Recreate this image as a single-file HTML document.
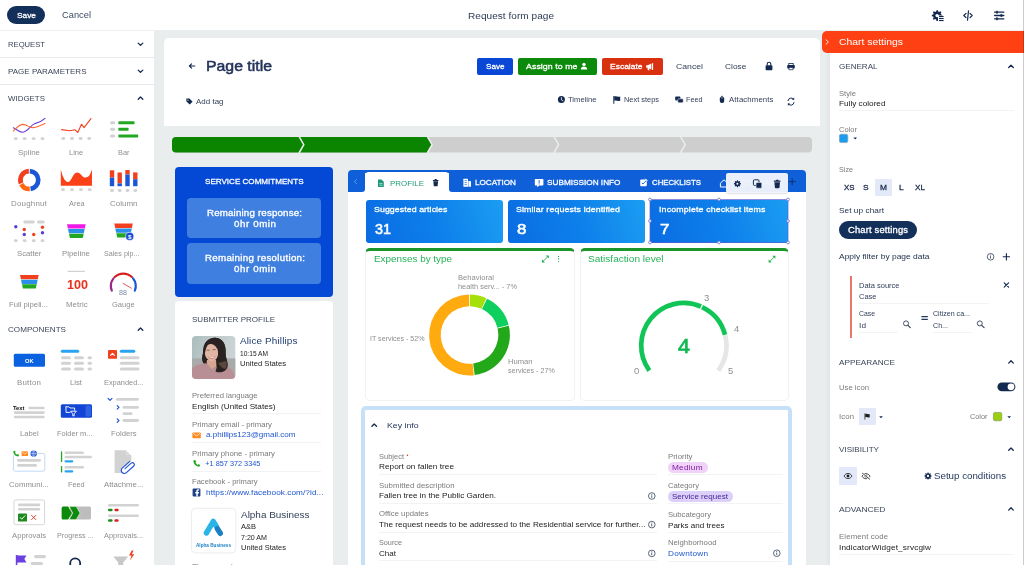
<!DOCTYPE html>
<html lang="en">
<head>
<meta charset="utf-8">
<title>Request form page</title>
<style>
html,body{margin:0;padding:0;}
body{width:1024px;height:565px;overflow:hidden;position:relative;background:#eaedee;font-family:"Liberation Sans", sans-serif;}
#app{position:absolute;left:0;top:0;width:1024px;height:565px;overflow:hidden;}
#app>div{position:absolute;box-sizing:border-box;}
#txt{position:absolute;left:0;top:0;width:1024px;height:565px;will-change:transform;}
#gfx{position:absolute;left:0;top:0;width:1024px;height:565px;overflow:hidden;}
.t{position:absolute;white-space:nowrap;font-family:"Liberation Sans", sans-serif;transform-origin:0 50%;}
</style>
</head>
<body>
<div id="app">
<div style="left:0px;top:0px;width:1024px;height:31px;background:#ffffff;"></div>
<div style="left:0px;top:30px;width:1024px;height:1px;background:#eceff1;"></div>
<div style="left:0px;top:31px;width:154px;height:534px;background:#ffffff;"></div>
<div style="left:0px;top:57px;width:154px;height:1px;background:#e7eaec;"></div>
<div style="left:0px;top:84px;width:154px;height:1px;background:#e7eaec;"></div>
<div style="left:7.2px;top:6.2px;width:37.8px;height:18px;background:#12305a;border-radius:9px;"></div>
<div style="left:164px;top:38px;width:656px;height:88px;background:#ffffff;border-radius:5px 5px 0 0;"></div>
<div style="left:476.5px;top:57.5px;width:36.5px;height:17.5px;background:#0a47d6;border-radius:2px;"></div>
<div style="left:517.5px;top:57.5px;width:79.5px;height:17.5px;background:#0b8a0b;border-radius:2px;"></div>
<div style="left:602px;top:57.5px;width:61px;height:17.5px;background:#d9300f;border-radius:2px;"></div>
<div style="left:175px;top:167px;width:158px;height:129.5px;background:#0449d6;border-radius:4px;"></div>
<div style="left:187px;top:197.5px;width:133.5px;height:40.5px;background:#3f7fe0;border-radius:4px;"></div>
<div style="left:187px;top:243px;width:133.5px;height:41px;background:#3f7fe0;border-radius:4px;"></div>
<div style="left:175px;top:301px;width:158px;height:270px;background:#ffffff;border-radius:4px;"></div>
<div style="left:192px;top:413.0px;width:129px;height:0.8px;background:#f1f3f4;"></div>
<div style="left:192px;top:441.79999999999995px;width:129px;height:0.8px;background:#f1f3f4;"></div>
<div style="left:192px;top:470.5px;width:129px;height:0.8px;background:#f1f3f4;"></div>
<div style="left:347.5px;top:170.2px;width:458px;height:400px;background:#ffffff;border-radius:4px 4px 0 0;"></div>
<div style="left:347.5px;top:170.2px;width:17.7px;height:22px;background:#0e5fd8;border-radius:4px 0 3px 0;"></div>
<div style="left:360px;top:170.2px;width:100px;height:3px;background:#0e5fd8;"></div>
<div style="left:449px;top:170.2px;width:356.5px;height:22px;background:#0e5fd8;border-radius:0 4px 0 3px;"></div>
<div style="left:365px;top:172px;width:84.2px;height:21px;background:#ffffff;border-radius:4px 4px 0 0;"></div>
<div style="left:365.5px;top:199.5px;width:137px;height:43px;background:linear-gradient(72deg,#0a6ce3 0%,#0d7fea 50%,#1b9df2 100%);border-radius:3px;"></div>
<div style="left:508px;top:199.5px;width:137px;height:43px;background:linear-gradient(72deg,#0a6ce3 0%,#0d7fea 50%,#1b9df2 100%);border-radius:3px;"></div>
<div style="left:650px;top:199.5px;width:138px;height:43px;background:linear-gradient(72deg,#0a6ce3 0%,#0d7fea 50%,#1b9df2 100%);border-radius:2px;"></div>
<div style="left:365px;top:248px;width:209.5px;height:153px;background:#ffffff;border-radius:5px;border:1px solid #eff1f2;border-top:3px solid #1a962a;"></div>
<div style="left:579.5px;top:248px;width:209px;height:153px;background:#ffffff;border-radius:5px;border:1px solid #eff1f2;border-top:3px solid #1a962a;"></div>
<div style="left:361px;top:406px;width:431px;height:170px;background:#ffffff;border-radius:5px;border:4px solid #c6e1f7;"></div>
<div style="left:379px;top:473.90000000000003px;width:278px;height:0.8px;background:#f1f3f4;"></div>
<div style="left:379px;top:502.8px;width:278px;height:0.8px;background:#f1f3f4;"></div>
<div style="left:379px;top:531.6px;width:278px;height:0.8px;background:#f1f3f4;"></div>
<div style="left:379px;top:560.4px;width:278px;height:0.8px;background:#f1f3f4;"></div>
<div style="left:668px;top:462.2px;width:39.6px;height:10.6px;background:#f1d2f8;border-radius:5.3px;"></div>
<div style="left:668px;top:474.2px;width:115px;height:0.8px;background:#f1f3f4;"></div>
<div style="left:668px;top:491px;width:65.2px;height:10.6px;background:#ddd0f8;border-radius:5.3px;"></div>
<div style="left:668px;top:503.2px;width:115px;height:0.8px;background:#f1f3f4;"></div>
<div style="left:668px;top:532px;width:115px;height:0.8px;background:#f1f3f4;"></div>
<div style="left:668px;top:560.8px;width:115px;height:0.8px;background:#f1f3f4;"></div>
<div style="left:825px;top:53px;width:5px;height:512px;background:linear-gradient(90deg,rgba(0,0,0,0),rgba(0,0,0,0.035));"></div>
<div style="left:830px;top:31px;width:194px;height:534px;background:#ffffff;"></div>
<div style="left:822.4px;top:30.8px;width:201.6px;height:22px;background:#ff4013;border-radius:5px 0 0 5px;"></div>
<div style="left:839px;top:110px;width:175px;height:0.8px;background:#f1f3f4;"></div>
<div style="left:875px;top:178.6px;width:17.4px;height:17.4px;background:#e4e9fa;border-radius:1px;"></div>
<div style="left:839px;top:220.6px;width:78px;height:18px;background:#12305a;border-radius:9px;"></div>
<div style="left:850px;top:276px;width:1.6px;height:62px;background:#e8776a;"></div>
<div style="left:859px;top:303.3px;width:130px;height:0.8px;background:#f1f3f4;"></div>
<div style="left:859px;top:332px;width:38.5px;height:0.8px;background:#f1f3f4;"></div>
<div style="left:933px;top:332px;width:38.5px;height:0.8px;background:#f1f3f4;"></div>
<div style="left:858.6px;top:407.6px;width:17.4px;height:17.8px;background:#e4e9fa;border-radius:1px;"></div>
<div style="left:839px;top:467.4px;width:18px;height:17.6px;background:#e4e9fa;border-radius:1px;"></div>
<div style="left:839px;top:554px;width:175px;height:0.8px;background:#f1f3f4;"></div>
<svg id="gfx" width="1024" height="565" viewBox="0 0 1024 565">
<g fill="#13294f">
<path d="M936.5 10.2l1.3 0 .4 1.4 1 .4 1.3-.7 .9 .9-.7 1.3 .4 1 1.4 .4 0 1.3-1.4 .4-.4 1 .7 1.3-.9 .9-1.3-.7-1 .4-.4 1.4-1.3 0-.4-1.4-1-.4-1.3 .7-.9-.9 .7-1.3-.4-1-1.4-.4 0-1.3 1.4-.4 .4-1-.7-1.3 .9-.9 1.3 .7 1-.4z"/>
</g>
<circle cx="937.1" cy="15.6" r="1.7" fill="#fff"/>
<rect x="938" y="15.5" width="6" height="6" fill="#fff"/>
<g fill="#13294f"><rect x="939" y="16" width="4.6" height="1.1"/><rect x="939" y="18" width="4.6" height="1.1"/><rect x="939" y="20" width="4.6" height="1.1"/></g>

<g fill="none" stroke="#13294f" stroke-width="1.2" stroke-linecap="round" stroke-linejoin="round">
<path d="M966 13.3L963.8 15.5L966 17.7"/><path d="M970 13.3L972.2 15.5L970 17.7"/><path d="M968.5 10.8L967.5 20.2"/></g>
<g stroke="#13294f" stroke-width="1.3" stroke-linecap="round">
<path d="M994.6 12.2H1003.8M994.6 15.5H1003.8M994.6 18.8H1003.8"/></g>
<g fill="#13294f"><rect x="996.2" y="10.8" width="1.6" height="2.8"/><rect x="1000.6" y="14.1" width="1.6" height="2.8"/><rect x="996.2" y="17.4" width="1.6" height="2.8"/></g>
<path d="M138.2 43.1L140.5 45.400000000000006L142.8 43.1" fill="none" stroke="#13294f" stroke-width="1.3" stroke-linecap="round" stroke-linejoin="round"/>
<path d="M138.2 70.10000000000001L140.5 72.4L142.8 70.10000000000001" fill="none" stroke="#13294f" stroke-width="1.3" stroke-linecap="round" stroke-linejoin="round"/>
<path d="M138.2 99.3L140.5 97.0L142.8 99.3" fill="none" stroke="#13294f" stroke-width="1.3" stroke-linecap="round" stroke-linejoin="round"/>
<path d="M138.2 330.3L140.5 328.0L142.8 330.3" fill="none" stroke="#13294f" stroke-width="1.3" stroke-linecap="round" stroke-linejoin="round"/>
<path d="M13.3 127.8C17 129.6 19.5 132.6 23 132.2C28 131.6 30.5 125.2 35 123.6C39 122.6 41.5 121.8 45 118.4" fill="none" stroke="#6b3fd9" stroke-width="1.1" stroke-linecap="round"/>
<path d="M13.3 131.2C16.5 128 19 124.4 23 124.4C27 124.6 29.5 128 33 127.6C37.5 127 41 125.4 45 123.4" fill="none" stroke="#ff6a33" stroke-width="1.1" stroke-linecap="round"/>
<rect x="13.9" y="137.29999999999998" width="3.8" height="2.8" rx="1.4" fill="#d2d2d2"/>
<rect x="22.8" y="137.29999999999998" width="3.8" height="2.8" rx="1.4" fill="#d2d2d2"/>
<rect x="31.800000000000004" y="137.29999999999998" width="3.8" height="2.8" rx="1.4" fill="#d2d2d2"/>
<rect x="40.6" y="137.29999999999998" width="3.8" height="2.8" rx="1.4" fill="#d2d2d2"/>
<path d="M61.6 129.6L69.5 130.8L75 129.8L77.8 132.4L81.5 124.2L84 127.6L91 118.6" fill="none" stroke="#f2401e" stroke-width="1.1" stroke-linecap="round" stroke-linejoin="round"/>
<rect x="61.4" y="137.1" width="3.8" height="2.8" rx="1.4" fill="#d2d2d2"/>
<rect x="70.1" y="137.1" width="3.8" height="2.8" rx="1.4" fill="#d2d2d2"/>
<rect x="78.69999999999999" y="137.1" width="3.8" height="2.8" rx="1.4" fill="#d2d2d2"/>
<rect x="87.3" y="137.1" width="3.8" height="2.8" rx="1.4" fill="#d2d2d2"/>
<rect x="110" y="121.3" width="5.200000000000003" height="3" rx="1.5" fill="#d2d2d2"/>
<rect x="118.4" y="121.3" width="16.099999999999994" height="3" rx="0.4" fill="#22a722"/>
<rect x="110" y="127.80000000000001" width="5.200000000000003" height="3" rx="1.5" fill="#d2d2d2"/>
<rect x="118.4" y="127.80000000000001" width="10.099999999999994" height="3" rx="0.4" fill="#22a722"/>
<rect x="110" y="134.5" width="5.200000000000003" height="3" rx="1.5" fill="#d2d2d2"/>
<rect x="118.4" y="134.5" width="19.799999999999983" height="3" rx="0.4" fill="#22a722"/>
<path d="M29.89 168.72A11.3 11.3 0 0 1 30.87 191.19L30.22 186.54A6.6 6.6 0 0 0 29.65 173.41Z" fill="#1a56d6"/>
<path d="M29.89 191.28A11.3 11.3 0 0 1 19.23 185.13L23.42 183.00A6.6 6.6 0 0 0 29.65 186.59Z" fill="#ff6a13"/>
<path d="M18.82 184.23A11.3 11.3 0 0 1 28.71 168.72L28.95 173.41A6.6 6.6 0 0 0 23.18 182.47Z" fill="#f2401e"/>
<path d="M60.8 185.8V169.6C62.5 176 64.5 182 68 182C71.5 182 73 172.4 77 172.4C81 172.4 82 177.6 85.5 177.6C89 177.6 90.5 174 92 169.6V185.8Z" fill="#fb4117"/>
<rect x="61.1" y="188.29999999999998" width="3.8" height="2.8" rx="1.4" fill="#d2d2d2"/>
<rect x="70.1" y="188.29999999999998" width="3.8" height="2.8" rx="1.4" fill="#d2d2d2"/>
<rect x="79.1" y="188.29999999999998" width="3.8" height="2.8" rx="1.4" fill="#d2d2d2"/>
<rect x="87.8" y="188.29999999999998" width="3.8" height="2.8" rx="1.4" fill="#d2d2d2"/>
<rect x="109.8" y="170.3" width="4.4" height="7.299999999999983" fill="#f2401e"/>
<rect x="109.8" y="177.6" width="4.4" height="8.599999999999994" fill="#1a56d6"/>
<rect x="117.5" y="172.5" width="4.4" height="10.900000000000006" fill="#f2401e"/>
<rect x="117.5" y="183.4" width="4.4" height="2.799999999999983" fill="#1a56d6"/>
<rect x="125.3" y="170" width="4.4" height="4.599999999999994" fill="#f2401e"/>
<rect x="125.3" y="174.6" width="4.4" height="11.599999999999994" fill="#1a56d6"/>
<rect x="133.10000000000002" y="172.4" width="4.4" height="6.799999999999983" fill="#f2401e"/>
<rect x="133.10000000000002" y="179.2" width="4.4" height="7.0" fill="#1a56d6"/>
<rect x="110.1" y="189.1" width="3.8" height="2.8" rx="1.4" fill="#d2d2d2"/>
<rect x="117.8" y="189.1" width="3.8" height="2.8" rx="1.4" fill="#d2d2d2"/>
<rect x="125.6" y="189.1" width="3.8" height="2.8" rx="1.4" fill="#d2d2d2"/>
<rect x="133.4" y="189.1" width="3.8" height="2.8" rx="1.4" fill="#d2d2d2"/>
<rect x="23.3" y="220.5" width="11.400000000000002" height="3" rx="1.5" fill="#d2d2d2"/>
<rect x="37" y="220.5" width="7.700000000000003" height="3" rx="1.5" fill="#d2d2d2"/>
<circle cx="15.8" cy="226.7" r="1.7" fill="#5a3fd6"/>
<circle cx="24.3" cy="229.5" r="1.7" fill="#f2401e"/>
<circle cx="24.3" cy="234.5" r="1.7" fill="#5a3fd6"/>
<circle cx="33.7" cy="234.5" r="1.7" fill="#f2401e"/>
<circle cx="42.5" cy="227.3" r="1.7" fill="#f2401e"/>
<circle cx="42.5" cy="232.8" r="1.7" fill="#5a3fd6"/>
<rect x="13.9" y="239.29999999999998" width="3.8" height="2.8" rx="1.4" fill="#d2d2d2"/>
<rect x="22.8" y="239.29999999999998" width="3.8" height="2.8" rx="1.4" fill="#d2d2d2"/>
<rect x="31.800000000000004" y="239.29999999999998" width="3.8" height="2.8" rx="1.4" fill="#d2d2d2"/>
<rect x="40.6" y="239.29999999999998" width="3.8" height="2.8" rx="1.4" fill="#d2d2d2"/>
<path d="M67.00 224.20L85.70 224.20L84.78 228.53L67.92 228.53Z" fill="#f019e8"/>
<path d="M68.00 228.93L84.70 228.93L83.78 233.27L68.92 233.27Z" fill="#2a8fe8"/>
<path d="M69.00 233.67L83.70 233.67L82.78 238.00L69.92 238.00Z" fill="#22a722"/>
<path d="M114.30 223.60L132.80 223.60L131.88 228.00L115.22 228.00Z" fill="#f2401e"/>
<path d="M115.30 228.40L131.80 228.40L130.88 232.80L116.22 232.80Z" fill="#2a8fe8"/>
<path d="M116.30 233.20L130.80 233.20L129.88 237.60L117.22 237.60Z" fill="#22a722"/>
<circle cx="129.7" cy="236.4" r="4.1" fill="#1a4fd6" stroke="#fff" stroke-width="0.6"/>
<text x="129.7" y="238.6" font-family="Liberation Sans, sans-serif" font-size="6" font-weight="700" fill="#fff" text-anchor="middle">$</text>
<path d="M20.00 275.00L38.70 275.00L37.79 279.27L20.91 279.27Z" fill="#f2401e"/>
<path d="M21.00 279.67L37.70 279.67L36.79 283.93L21.91 283.93Z" fill="#2a8fe8"/>
<path d="M22.00 284.33L36.70 284.33L35.79 288.60L22.91 288.60Z" fill="#22a722"/>
<rect x="67.5" y="270.7" width="17.5" height="1.2" rx="0.6" fill="#d2d2d2"/>
<path d="M111.80 290.65A12.4 12.4 0 0 1 113.53 278.37" fill="none" stroke="#9a2a8a" stroke-width="2.2" stroke-linecap="round"/>
<path d="M114.69 277.08A12.4 12.4 0 0 1 131.91 277.08" fill="none" stroke="#d6201e" stroke-width="2.2" stroke-linecap="round"/>
<path d="M133.07 278.37A12.4 12.4 0 0 1 134.80 290.65" fill="none" stroke="#1a56d6" stroke-width="2.2" stroke-linecap="round"/>
<path d="M123 283.4L131.4 288.2" stroke="#e0302a" stroke-width="0.8" stroke-linecap="round"/>
<rect x="13.8" y="353.7" width="31.2" height="13" rx="1.5" fill="#0a62e0"/>
<rect x="60.8" y="349.8" width="18.400000000000006" height="3" rx="1.5" fill="#2aa4f0"/>
<rect x="61" y="356.2" width="10" height="3" rx="1.5" fill="#d2d2d2"/>
<rect x="74" y="356.2" width="10" height="3" rx="1.5" fill="#d2d2d2"/>
<rect x="87.5" y="356.2" width="4.5" height="3" rx="1.5" fill="#d2d2d2"/>
<rect x="61" y="361.8" width="10" height="3" rx="1.5" fill="#d2d2d2"/>
<rect x="74" y="361.8" width="10" height="3" rx="1.5" fill="#d2d2d2"/>
<rect x="87.5" y="361.8" width="4.5" height="3" rx="1.5" fill="#d2d2d2"/>
<rect x="61" y="367.5" width="10" height="3" rx="1.5" fill="#d2d2d2"/>
<rect x="74" y="367.5" width="10" height="3" rx="1.5" fill="#d2d2d2"/>
<rect x="87.5" y="367.5" width="4.5" height="3" rx="1.5" fill="#d2d2d2"/>
<rect x="108" y="350" width="9" height="8.8" rx="1" fill="#f2401e"/>
<path d="M110.6 355.4L112.5 353.4L114.4 355.4" fill="none" stroke="#fff" stroke-width="1.1" stroke-linecap="round" stroke-linejoin="round"/>
<rect x="119.8" y="349.8" width="15.500000000000014" height="3" rx="1.5" fill="#2aa4f0"/>
<rect x="119.8" y="356.2" width="19.700000000000003" height="3" rx="1.5" fill="#d2d2d2"/>
<rect x="119.8" y="361.8" width="19.700000000000003" height="3" rx="1.5" fill="#d2d2d2"/>
<rect x="119.8" y="367.5" width="19.700000000000003" height="3" rx="1.5" fill="#d2d2d2"/>
<rect x="28.3" y="406.7" width="16.400000000000002" height="2.6" rx="1.3" fill="#d2d2d2"/>
<rect x="13.8" y="411.3" width="30.900000000000002" height="2.6" rx="1.3" fill="#d2d2d2"/>
<rect x="13.8" y="415.7" width="30.900000000000002" height="2.6" rx="1.3" fill="#d2d2d2"/>
<rect x="60.8" y="404.3" width="31.2" height="13.5" rx="1.5" fill="#1245d6"/>
<path d="M66 406.8h3l1 1.2h4.6v2.2M66 406.8v5.6h4" fill="none" stroke="#fff" stroke-width="0.9" stroke-linejoin="round" stroke-linecap="round"/>
<path d="M70.6 411.2h5.8l-2.2 2.6v2l-1.4 .1v-2.1z" fill="none" stroke="#fff" stroke-width="0.9" stroke-linejoin="round"/>
<rect x="85.5" y="405.6" width="5.5" height="10.9" rx="1.5" fill="#2f62e0"/>
<path d="M108 398.4L110 400.4L112 398.4" fill="none" stroke="#1a4fd6" stroke-width="1.1" stroke-linecap="round" stroke-linejoin="round"/>
<rect x="116" y="397.90000000000003" width="23" height="2.8" rx="1.4" fill="#d2d2d2"/>
<path d="M117.2 405.6L119 407.4L117.2 409.2" fill="none" stroke="#1a4fd6" stroke-width="1.1" stroke-linecap="round" stroke-linejoin="round"/>
<rect x="122.5" y="405.90000000000003" width="16.5" height="2.8" rx="1.4" fill="#d2d2d2"/>
<rect x="122.5" y="412.3" width="10.0" height="2.8" rx="1.4" fill="#d2d2d2"/>
<path d="M117.2 418.8L119 420.6L117.2 422.4" fill="none" stroke="#1a4fd6" stroke-width="1.1" stroke-linecap="round" stroke-linejoin="round"/>
<rect x="122.5" y="419.1" width="16.5" height="2.8" rx="1.4" fill="#d2d2d2"/>
<rect x="13.4" y="453.4" width="31.4" height="17.8" rx="2" fill="#fff" stroke="#a8c8f5" stroke-width="0.7"/>
<rect x="12.5" y="449" width="25" height="6.2" fill="#fff"/>
<rect x="17" y="458.90000000000003" width="24" height="2.8" rx="1.4" fill="#d2d2d2"/>
<rect x="17" y="464.0" width="20" height="2.8" rx="1.4" fill="#d2d2d2"/>
<path d="M13.4 451.2c-.2 2.6 1.9 5 4.8 5.2l1-1.3-1.5-1.1-.8 .7c-.9-.5-1.5-1.2-1.9-2l.7-.8-1-1.5z" fill="#22a722"/>
<rect x="21.6" y="451.2" width="6.4" height="4.8" rx="0.6" fill="#ff8a1f"/><path d="M22 451.8L24.8 454L27.6 451.8" fill="none" stroke="#fff" stroke-width="0.6"/>
<circle cx="33.7" cy="453.6" r="3.2" fill="#1a4fd6"/><path d="M30.6 453.6h6.2M33.7 450.5v6.2M33.7 450.5c-2 1.8-2 4.4 0 6.2M33.7 450.5c2 1.8 2 4.4 0 6.2" fill="none" stroke="#fff" stroke-width="0.45"/>
<rect x="60.9" y="451.3" width="1.3" height="10.8" rx="0.6" fill="#22a722"/><rect x="60.9" y="466" width="1.3" height="6.6" rx="0.6" fill="#22a722"/>
<rect x="64.5" y="451.5" width="19.5" height="2.4" rx="1.2" fill="#d2d2d2"/>
<rect x="64.5" y="455.8" width="27.5" height="2.4" rx="1.2" fill="#d2d2d2"/>
<rect x="64.5" y="460.2" width="8.799999999999997" height="2.2" rx="1.1" fill="#2aa4f0"/>
<rect x="64.5" y="466.0" width="19.5" height="2.4" rx="1.2" fill="#d2d2d2"/>
<rect x="64.5" y="470.29999999999995" width="8.799999999999997" height="2.2" rx="1.1" fill="#2aa4f0"/>
<path d="M114.6 450.2h11.6l5.2 5v5.6l-9 6.8-.6 5.4h-7.2z" fill="#d2d2d2"/><path d="M126.6 450.4l4.6 4.6h-4.6z" fill="#fff"/><path d="M127 451.6l3.2 3.2h-3.2z" fill="#d2d2d2"/>
<path d="M125 468.6l6.2-5.4a1.9 1.9 0 0 1 2.6 2.8l-7.4 6.6a3 3 0 0 1-4.2-4.4l7.6-6.8" fill="none" stroke="#1a4fd6" stroke-width="1.1" stroke-linecap="round" stroke-linejoin="round"/>
<rect x="14" y="499.9" width="30.6" height="24.8" rx="2" fill="#fff" stroke="#c4c4c4" stroke-width="0.7"/>
<rect x="18" y="503.59999999999997" width="22.200000000000003" height="2.6" rx="1.3" fill="#d2d2d2"/>
<rect x="18" y="508.0" width="22.200000000000003" height="2.6" rx="1.3" fill="#d2d2d2"/>
<rect x="18" y="513.4" width="9" height="8.2" rx="1.2" fill="#1c8a1c"/><path d="M20.2 517.6L21.8 519.2L24.8 515.8" fill="none" stroke="#fff" stroke-width="1" stroke-linecap="round" stroke-linejoin="round"/>
<path d="M31.6 515.4L35.8 519.6M35.8 515.4L31.6 519.6" stroke="#d6301e" stroke-width="0.9" stroke-linecap="round"/>
<path d="M70 506.6h19.4a1.6 1.6 0 0 1 1.6 1.6v9.8a1.6 1.6 0 0 1-1.6 1.6H70z" fill="#bdbdbd"/>
<path d="M63.2 506.6h5l3.6 6.5l-3.6 6.5h-5a1.6 1.6 0 0 1-1.6-1.6v-9.8a1.6 1.6 0 0 1 1.6-1.6z" fill="#0b8a0b"/>
<path d="M69.2 506.6h7l3.8 6.5l-3.8 6.5h-7l3.6-6.5z" fill="#0b8a0b" stroke="#fff" stroke-width="0.5"/>
<rect x="108" y="504.0" width="31" height="2.6" rx="1.3" fill="#d2d2d2"/>
<rect x="108" y="508.8" width="4.599999999999994" height="2.4" rx="1.2" fill="#1c8a1c"/>
<rect x="114.4" y="508.8" width="4.199999999999989" height="2.4" rx="1.2" fill="#d6201e"/>
<rect x="108" y="514.4000000000001" width="31" height="2.6" rx="1.3" fill="#d2d2d2"/>
<rect x="108" y="519.3" width="4.599999999999994" height="2.4" rx="1.2" fill="#1c8a1c"/>
<rect x="114.4" y="519.3" width="4.199999999999989" height="2.4" rx="1.2" fill="#d6201e"/>
<path d="M16 555.4h10.4l-2 3.6 2 3.6H16z" fill="#6b3fe0"/><rect x="15.8" y="555" width="1.6" height="12" fill="#6b3fe0"/>
<rect x="34" y="554.9" width="12" height="3.4" rx="1.7" fill="#d2d2d2"/>
<rect x="30.6" y="561.9" width="12.399999999999999" height="3.4" rx="1.7" fill="#d2d2d2"/>
<circle cx="75.2" cy="563.4" r="5" fill="none" stroke="#13294f" stroke-width="1.8"/>
<path d="M113.2 556.4h15l-5 6v4h-5v-4z" fill="#c8c8c8"/>
<path d="M131.800 550.600l-2.800 5h2.500l-1.600 5 4.400-6.400h-2.500l1.800-3.600z" fill="#f2401e"/>
<path d="M194.8 66H189.4M191.6 63.8L189.4 66L191.6 68.2" fill="none" stroke="#13294f" stroke-width="1.1" stroke-linecap="round" stroke-linejoin="round"/>
<path d="M186.4 98.6h3l3.2 3.1-2.9 2.9-3.3-3.1z" fill="#13294f"/><circle cx="187.9" cy="100.1" r="0.6" fill="#fff"/>
<circle cx="584" cy="64.4" r="1.7" fill="#fff"/><path d="M580.8 69.6c0-2.2 1.2-3.2 3.2-3.2s3.2 1 3.2 3.2z" fill="#fff"/>
<path d="M646.2 65.2h1.6l3.6-1.8v6.2l-3.600-1.800H646.200z" fill="#fff"/><rect x="652" y="63" width="1.100" height="7" rx="0.5" fill="#fff"/><path d="M647.400 68h1.600l.5 2.200h-1.600z" fill="#fff"/>
<rect x="765.6" y="65.2" width="6.8" height="5" rx="0.8" fill="#13294f"/><path d="M767.2 65.4v-1.4a1.8 1.8 0 0 1 3.6 0v1.4" fill="none" stroke="#13294f" stroke-width="1.1"/>
<rect x="788.8" y="63.4" width="4.4" height="2" fill="none" stroke="#13294f" stroke-width="0.8"/><rect x="787.2" y="65" width="7.6" height="3.6" rx="0.8" fill="#13294f"/><rect x="789" y="67.4" width="4" height="2.4" fill="#fff" stroke="#13294f" stroke-width="0.7"/>
<circle cx="561.4" cy="99.6" r="3.5" fill="#13294f"/><path d="M561.4 97.6v2.2l1.6 .9" fill="none" stroke="#fff" stroke-width="0.8" stroke-linecap="round"/>
<path d="M613.8 96.4v7" stroke="#13294f" stroke-width="1" stroke-linecap="round"/><path d="M614.2 96.6c2-.9 3.6 .9 6 0v4.2c-2.4 .9-4-.9-6 0z" fill="#13294f"/>
<rect x="675.2" y="96.6" width="5.2" height="4" rx="0.8" fill="#13294f"/><rect x="677.8" y="98.8" width="5.4" height="4" rx="0.8" fill="#13294f" stroke="#fff" stroke-width="0.5"/>
<rect x="719.8" y="96.4" width="4.4" height="6.6" rx="2" fill="#13294f"/><rect x="721" y="95.8" width="2" height="2.4" rx="0.8" fill="#13294f" stroke="#fff" stroke-width="0.4"/>
<g fill="none" stroke="#13294f" stroke-width="1" stroke-linecap="round"><path d="M788 100.6a3.2 3.2 0 0 1 5.6-1.4"/><path d="M794 102.6a3.2 3.2 0 0 1-5.6 1.4"/></g><path d="M794.2 97.4v2.4h-2.4z" fill="#13294f"/><path d="M787.8 105.8v-2.4h2.4z" fill="#13294f"/>
<rect x="172" y="137" width="640" height="15.4" rx="4" fill="#cecece"/>
<path d="M176 137H427L431.6 144.7L427 152.4H176a4 4 0 0 1-4-4v-7.4a4 4 0 0 1 4-4z" fill="#0b8500"/>
<path d="M299 136.4L303.8 144.7L299 153" fill="none" stroke="#eaedee" stroke-width="1.5"/>
<path d="M427.3 136.4L432.1 144.7L427.3 153" fill="none" stroke="#eaedee" stroke-width="1.5"/>
<path d="M553.8 136.4L558.6 144.7L553.8 153" fill="none" stroke="#eaedee" stroke-width="1.5"/>
<path d="M680.4 136.4L685.2 144.7L680.4 153" fill="none" stroke="#eaedee" stroke-width="1.5"/>
<defs><clipPath id="ph"><rect x="192" y="335.9" width="43.3" height="43.1" rx="4"/></clipPath>
<linearGradient id="phbg" x1="0" y1="0" x2="1" y2="0.3"><stop offset="0" stop-color="#a9bcbc"/><stop offset="0.5" stop-color="#bfcacb"/><stop offset="1" stop-color="#cdd4d5"/></linearGradient>
<filter id="phbl" x="-10%" y="-10%" width="120%" height="120%"><feGaussianBlur stdDeviation="0.55"/></filter></defs>
<g clip-path="url(#ph)">
<rect x="190" y="334" width="48" height="48" fill="url(#phbg)"/>
<g filter="url(#phbl)">
<rect x="190" y="358.400" width="48" height="24" fill="#a9aaa9"/>
<path d="M203.0 353.0C202.5 343.0 208.0 337.6 215.5 337.8C223.0 338.2 226.2 345.0 225.6 353.0C225.4 358.0 228.4 362.0 227.4 367.0C226.4 371.6 220.0 373.6 215.5 371.4L207.0 366.0C201.0 363.4 201.6 358.0 203.0 353.0Z" fill="#2b2422"/>
<path d="M191.0 380.0V369C194.5 365.6 200.0 363.8 205.5 363.2L212.0 368.0L221.0 365.4C227.5 365.4 232.0 368.0 234.0 373.5L236.0 380.0Z" fill="#b98f96"/>
<path d="M207.0 360.0L216.0 360.0L216.5 366.5L212.0 369.0L206.5 364.0Z" fill="#d5a692"/>
<ellipse cx="211.400" cy="352.600" rx="6.700" ry="8.600" transform="rotate(-8 211.4 352.6)" fill="#e0b5a1"/>
<path d="M208.5 342.5C211.0 339.6 216.5 340.0 218.4 345.0C219.6 349.0 218.4 355.0 218.2 359.0C218.0 364.0 216.6 368.0 215.5 371.4C220.0 373.6 226.4 371.6 227.4 367.0C228.4 362.0 225.4 358.0 225.6 353.0C226.2 345.0 223.0 338.2 215.5 337.8C211.0 337.8 207.0 340.0 205.0 344.0Z" fill="#2b2422"/>
<path d="M218.0 363.0C220.0 366.0 223.0 369.0 225.5 369.0C227.0 367.0 227.4 364.0 226.0 361.0Z" fill="#5b463b"/>
<path d="M204.4 348.0C205.0 344.0 207.0 341.6 210.0 341.0C208.4 343.0 206.6 346.0 205.4 351.0C204.6 354.0 204.0 358.0 202.6 360.0C202.0 357.0 203.0 352.0 204.4 348.0Z" fill="#2b2422"/>
<path d="M207.6 356.6C209.6 358.2 213.4 358.0 215.4 356.0C214.6 359.4 209.4 360.0 207.6 356.6Z" fill="#c46f78"/>
<path d="M208.6 357.0C210.4 357.8 212.8 357.6 214.6 356.6L214.0 357.6C212.4 358.6 210.4 358.6 208.6 357.0Z" fill="#f4ecea"/>
<path d="M206.6 350.2h3M212.6 349.6h3" stroke="#5a3f38" stroke-width="0.7"/>
</g>
</g>
<rect x="192.4" y="432.4" width="8.400" height="5.800" rx="0.8" fill="#ff8a1f"/><path d="M193 433.200L196.600 436L200.200 433.200" fill="none" stroke="#fff" stroke-width="0.7"/>
<path d="M193.400 460.600c-.2 3 2.400 6 5.800 6.200l1.100-1.500-1.700-1.200-.9 .8c-1-.5-1.700-1.300-2.200-2.300l.8-.9-1.200-1.700z" fill="#22a722"/>
<rect x="192.600" y="488.600" width="7.800" height="7.800" rx="1" fill="#1d3f86"/><path d="M197.800 496.400v-3h1.100l.2-1.300h-1.300v-.8c0-.4.200-.7.700-.7h.7v-1.200c-.3 0-.7-.1-1.100-.1c-1.100 0-1.800.7-1.800 1.900v.9h-1.100v1.300h1.100v3z" fill="#fff"/>
<rect x="191.400" y="508.300" width="44.400" height="44.600" rx="4" fill="#fff" stroke="#e4e7ea" stroke-width="0.8"/>
<path d="M206.400 533L213.300 521.400L216.400 526.400" fill="none" stroke="#2bb4e6" stroke-width="5.400" stroke-linecap="round" stroke-linejoin="round"/>
<path d="M217.400 528.800L220.300 533.300" fill="none" stroke="#1a7fc4" stroke-width="5.400" stroke-linecap="round"/>
<path d="M356.400 179.600L354.400 181.600L356.400 183.600" fill="none" stroke="#6aa5f0" stroke-width="0.9" stroke-linecap="round" stroke-linejoin="round"/>
<path d="M378 179.400h3.400l2.400 2.400v5.200h-5.800z" fill="#1f9a78"/><path d="M379.400 183.400h3M379.400 185.200h3" stroke="#fff" stroke-width="0.6"/>
<g transform="translate(435.7 182.6) scale(0.85)"><rect x="-3.400" y="-3.200" width="6.800" height="1.200" rx="0.4" fill="#13294f"/><rect x="-1.300" y="-4.100" width="2.600" height="1.200" rx="0.4" fill="#13294f"/><path d="M-2.800 -1.500h5.600l-.5 5.200a.8.8 0 0 1-.8.700h-3a.8.8 0 0 1-.8-.7z" fill="#13294f"/></g>
<rect x="463.400" y="178.800" width="4.600" height="8" rx="0.500" fill="#fff"/><rect x="468.400" y="181" width="2.600" height="5.800" rx="0.400" fill="#fff"/><path d="M464.600 180.600h2.200M464.600 182.600h2.200M464.600 184.600h2.200" stroke="#0e5fd8" stroke-width="0.700"/>
<path d="M535.400 179h7.400a.6.600 0 0 1 .6.600v5.200a.6.600 0 0 1-.6.600h-3.600l-2 1.800v-1.800h-1.800a.6.600 0 0 1-.6-.6v-5.200a.6.600 0 0 1 .6-.6z" fill="#fff"/><rect x="538.600" y="180.200" width="1" height="2.600" fill="#0e5fd8"/><rect x="538.600" y="183.400" width="1" height="1" fill="#0e5fd8"/>
<rect x="640.200" y="179.400" width="6.600" height="6.800" rx="1" fill="#fff"/><path d="M641.800 182.800l1.200 1.200 3.600-3.800" fill="none" stroke="#0e5fd8" stroke-width="0.9"/><path d="M645.400 178.800l2.200 2.200" stroke="#fff" stroke-width="1"/>
<path d="M720.400 183.200l3.600-3.400 3.600 3.400v3.800h-7.200z" fill="none" stroke="#fff" stroke-width="1"/>
<path d="M792.200 178.600v6.200M789.100 181.700h6.200" stroke="#12306a" stroke-width="1" stroke-linecap="round"/>
<rect x="650" y="199.500" width="138" height="43" fill="none" stroke="#5a5fd0" stroke-width="0.7"/>
<circle cx="650" cy="199.5" r="1.400" fill="#fff" stroke="#5a5fd0" stroke-width="0.7"/>
<circle cx="650" cy="221" r="1.400" fill="#fff" stroke="#5a5fd0" stroke-width="0.7"/>
<circle cx="650" cy="242.5" r="1.400" fill="#fff" stroke="#5a5fd0" stroke-width="0.7"/>
<circle cx="719" cy="199.5" r="1.400" fill="#fff" stroke="#5a5fd0" stroke-width="0.7"/>
<circle cx="719" cy="242.5" r="1.400" fill="#fff" stroke="#5a5fd0" stroke-width="0.7"/>
<circle cx="788" cy="199.5" r="1.400" fill="#fff" stroke="#5a5fd0" stroke-width="0.7"/>
<circle cx="788" cy="221" r="1.400" fill="#fff" stroke="#5a5fd0" stroke-width="0.7"/>
<circle cx="788" cy="242.5" r="1.400" fill="#fff" stroke="#5a5fd0" stroke-width="0.7"/>
<g stroke="#1fb34f" stroke-width="0.9" fill="none" stroke-linecap="round"><path d="M542.8 261.6L548.0 256.4"/></g><path d="M548.8 255.6v3l-3-3z" fill="#1fb34f"/><path d="M542.0 262.4v-3l3 3z" fill="#1fb34f"/>
<circle cx="558.600" cy="256.4" r="0.650" fill="#1fb34f"/>
<circle cx="558.600" cy="259" r="0.650" fill="#1fb34f"/>
<circle cx="558.600" cy="261.6" r="0.650" fill="#1fb34f"/>
<g stroke="#1fb34f" stroke-width="0.9" fill="none" stroke-linecap="round"><path d="M769.4 261.8L774.6 256.59999999999997"/></g><path d="M775.4 255.79999999999998v3l-3-3z" fill="#1fb34f"/><path d="M768.6 262.59999999999997v-3l3 3z" fill="#1fb34f"/>
<circle cx="469.5" cy="335" r="40.800" fill="#fff"/>
<path d="M469.92 294.60A40.4 40.4 0 0 1 486.32 298.27L481.49 308.81A28.8 28.8 0 0 0 469.80 306.20Z" fill="#a6e00a"/>
<path d="M487.08 298.63A40.4 40.4 0 0 1 508.63 324.95L497.40 327.84A28.8 28.8 0 0 0 482.03 309.07Z" fill="#0fcf5f"/>
<path d="M508.83 325.77A40.4 40.4 0 0 1 474.70 375.06L473.21 363.56A28.8 28.8 0 0 0 497.54 328.42Z" fill="#22a818"/>
<path d="M473.86 375.16A40.4 40.4 0 1 1 469.08 294.60L469.20 306.20A28.8 28.8 0 1 0 472.61 363.63Z" fill="#ffab0f"/>
<path d="M649.34 370.54A42.6 42.6 0 0 1 700.99 306.52" fill="none" stroke="#10c456" stroke-width="4.7" stroke-linecap="butt"/>
<path d="M702.07 307.02A42.6 42.6 0 0 1 725.06 334.91" fill="none" stroke="#10c456" stroke-width="4.7" stroke-linecap="butt"/>
<path d="M725.06 334.91A42.6 42.6 0 0 1 718.26 370.54" fill="none" stroke="#e6e6e6" stroke-width="4.7" stroke-linecap="butt"/>
<path d="M371.9 426.3L374.2 424.0L376.5 426.3" fill="none" stroke="#13294f" stroke-width="1.3" stroke-linecap="round" stroke-linejoin="round"/>
<circle cx="407.400" cy="455.200" r="0.800" fill="#e0301e"/>
<circle cx="651.8" cy="496" r="3.300" fill="none" stroke="#33415a" stroke-width="0.800"/><rect x="651.4" y="495.3" width="0.800" height="2.500" fill="#33415a"/><circle cx="651.8" cy="494.3" r="0.500" fill="#33415a"/>
<circle cx="651.8" cy="524.6" r="3.300" fill="none" stroke="#33415a" stroke-width="0.800"/><rect x="651.4" y="523.9" width="0.800" height="2.500" fill="#33415a"/><circle cx="651.8" cy="522.9" r="0.500" fill="#33415a"/>
<circle cx="651.8" cy="553.4" r="3.300" fill="none" stroke="#33415a" stroke-width="0.800"/><rect x="651.4" y="552.6999999999999" width="0.800" height="2.500" fill="#33415a"/><circle cx="651.8" cy="551.6999999999999" r="0.500" fill="#33415a"/>
<circle cx="776.8" cy="553.2" r="3.300" fill="none" stroke="#33415a" stroke-width="0.800"/><rect x="776.4" y="552.5" width="0.800" height="2.500" fill="#33415a"/><circle cx="776.8" cy="551.5" r="0.500" fill="#33415a"/>
<path d="M826 39.800L828.400 42L826 44.200" fill="none" stroke="#fff" stroke-width="0.9" stroke-linecap="round" stroke-linejoin="round"/>
<path d="M1008.7 67.5L1011 65.2L1013.3 67.5" fill="none" stroke="#13294f" stroke-width="1.3" stroke-linecap="round" stroke-linejoin="round"/>
<rect x="839.400" y="134.200" width="8.400" height="8.400" rx="1.600" fill="#1a9cf0" stroke="#8aa0b0" stroke-width="0.700"/>
<path d="M853.400 137.600h3.600l-1.800 2z" fill="#13294f"/>
<circle cx="990.6" cy="256.8" r="3.300" fill="none" stroke="#33415a" stroke-width="0.800"/><rect x="990.2" y="256.1" width="0.800" height="2.500" fill="#33415a"/><circle cx="990.6" cy="255.10000000000002" r="0.500" fill="#33415a"/>
<path d="M1006.400 253.600v6.400M1003.200 256.800h6.400" stroke="#13294f" stroke-width="1.100" stroke-linecap="round"/>
<path d="M1004.200 282.800l4.400 4.400M1008.600 282.800l-4.400 4.400" stroke="#13294f" stroke-width="1.200" stroke-linecap="round"/>
<circle cx="906" cy="323.4" r="2.500" fill="none" stroke="#33415a" stroke-width="0.9"/><path d="M907.9 325.29999999999995L910.3 327.7" stroke="#33415a" stroke-width="1.100" stroke-linecap="round"/>
<path d="M921.400 316.600h6.400M921.400 319.400h6.400" stroke="#24385c" stroke-width="1.100"/>
<circle cx="979.8" cy="323.4" r="2.500" fill="none" stroke="#33415a" stroke-width="0.9"/><path d="M981.6999999999999 325.29999999999995L984.0999999999999 327.7" stroke="#33415a" stroke-width="1.100" stroke-linecap="round"/>
<path d="M1008.7 363.1L1011 360.8L1013.3 363.1" fill="none" stroke="#13294f" stroke-width="1.3" stroke-linecap="round" stroke-linejoin="round"/>
<rect x="997.400" y="382.400" width="18" height="8.800" rx="4.400" fill="#13294f"/><circle cx="1011" cy="386.800" r="3.400" fill="#fff"/>
<g transform="translate(867.3 416.500) scale(0.85) translate(-867.400 -416.600)"><path d="M864.600 413.400v6.400" stroke="#1c1c1c" stroke-width="0.9" stroke-linecap="round"/><path d="M865 413.600c1.800-.8 3.200 .8 5.200 0v3.800c-2 .8-3.400-.8-5.200 0z" fill="#1c1c1c"/></g>
<path d="M879.200 416.200h3.600l-1.800 2z" fill="#13294f"/>
<rect x="993.400" y="412.400" width="8.400" height="8.400" rx="1.600" fill="#9bd00f" stroke="#8a9a70" stroke-width="0.700"/>
<path d="M1007.400 416.200h3.600l-1.800 2z" fill="#13294f"/>
<path d="M1008.7 450.3L1011 448.0L1013.3 450.3" fill="none" stroke="#13294f" stroke-width="1.3" stroke-linecap="round" stroke-linejoin="round"/>
<path d="M844 476c2-3.400 6-3.400 8 0c-2 3.400-6 3.400-8 0z" fill="none" stroke="#1c1c1c" stroke-width="0.800"/><circle cx="848" cy="476" r="1.400" fill="#1c1c1c"/>
<path d="M862 476.2c2-3.400 6-3.400 8 0c-2 3.400-6 3.400-8 0z" fill="none" stroke="#1c1c1c" stroke-width="0.800"/><circle cx="866" cy="476.2" r="1.400" fill="#1c1c1c"/>
<path d="M862.4 473.2L869.6 479.2" stroke="#fff" stroke-width="2"/><path d="M862.4 473.2L869.6 479.2" stroke="#1c1c1c" stroke-width="0.800" stroke-linecap="round"/>
<g fill="#13294f" transform="translate(928 476) scale(0.84) translate(-928 -476)"><path d="M927.500 471.800l1.100 0 .3 1.100 .8 .3 1-.6 .8 .8-.6 1 .3 .8 1.100 .3 0 1.100-1.100 .3-.3 .8 .6 1-.8 .8-1-.6-.8 .3-.3 1.100-1.100 0-.3-1.100-.8-.3-1 .6-.8-.8 .6-1-.3-.8-1.100-.3 0-1.100 1.100-.3 .3-.8-.6-1 .8-.8 1 .6 .8-.3z"/></g>
<circle cx="928" cy="476" r="1.150" fill="#fff"/>
<path d="M1008.7 510.1L1011 507.8L1013.3 510.1" fill="none" stroke="#13294f" stroke-width="1.3" stroke-linecap="round" stroke-linejoin="round"/>
</svg>
<div id="txt">
<span class="t" style="left:16.70px;top:11px;font-size:7.6px;line-height:9px;color:#ffffff;transform:scaleX(1.097);-webkit-text-stroke:0.27px #ffffff;">Save</span>
<span class="t" style="left:62.34px;top:11px;font-size:8.2px;line-height:9px;color:#3a4a63;letter-spacing:0.033px;transform:scaleX(1.130);">Cancel</span>
<span class="t" style="left:468.00px;top:11px;font-size:8.9px;line-height:10px;color:#2b3a52;letter-spacing:0.039px;transform:scaleX(1.130);">Request form page</span>
<span class="t" style="left:7.85px;top:40px;font-size:7.5px;line-height:9px;color:#3b4658;transform:scaleX(1.020);">REQUEST</span>
<span class="t" style="left:7.85px;top:67px;font-size:7.5px;line-height:9px;color:#3b4658;transform:scaleX(1.068);">PAGE PARAMETERS</span>
<span class="t" style="left:7.85px;top:94px;font-size:7.5px;line-height:9px;color:#3b4658;transform:scaleX(1.057);">WIDGETS</span>
<span class="t" style="left:7.85px;top:325px;font-size:7.5px;line-height:9px;color:#3b4658;transform:scaleX(1.079);">COMPONENTS</span>
<span class="t" style="left:18.00px;top:149px;font-size:7px;line-height:7px;color:#8f8f8f;transform:scaleX(1.130);">Spline</span>
<span class="t" style="left:69.10px;top:149px;font-size:7px;line-height:7px;color:#8f8f8f;transform:scaleX(1.073);">Line</span>
<span class="t" style="left:117.85px;top:149px;font-size:7px;line-height:7px;color:#8f8f8f;transform:scaleX(1.054);">Bar</span>
<span class="t" style="left:11.00px;top:200px;font-size:7px;line-height:7px;color:#8f8f8f;letter-spacing:0.189px;transform:scaleX(1.130);">Doughnut</span>
<span class="t" style="left:68.60px;top:200px;font-size:7px;line-height:7px;color:#8f8f8f;transform:scaleX(1.054);">Area</span>
<span class="t" style="left:109.90px;top:200px;font-size:7px;line-height:7px;color:#8f8f8f;letter-spacing:0.025px;transform:scaleX(1.130);">Column</span>
<span class="t" style="left:16.70px;top:250px;font-size:7px;line-height:7px;color:#8f8f8f;transform:scaleX(1.100);">Scatter</span>
<span class="t" style="left:62.30px;top:250px;font-size:7px;line-height:7px;color:#8f8f8f;transform:scaleX(1.124);">Pipeline</span>
<span class="t" style="left:103.90px;top:250px;font-size:7px;line-height:7px;color:#8f8f8f;transform:scaleX(1.022);">Sales pip...</span>
<span class="t" style="left:9.30px;top:301px;font-size:7px;line-height:7px;color:#8f8f8f;transform:scaleX(1.102);">Full pipeli...</span>
<span class="t" style="left:65.65px;top:301px;font-size:7px;line-height:7px;color:#8f8f8f;letter-spacing:0.028px;transform:scaleX(1.130);">Metric</span>
<span class="t" style="left:112.25px;top:301px;font-size:7px;line-height:7px;color:#8f8f8f;transform:scaleX(1.079);">Gauge</span>
<span class="t" style="left:17.00px;top:379px;font-size:7px;line-height:7px;color:#8f8f8f;letter-spacing:0.198px;transform:scaleX(1.130);">Button</span>
<span class="t" style="left:70.30px;top:379px;font-size:7px;line-height:7px;color:#8f8f8f;transform:scaleX(1.100);">List</span>
<span class="t" style="left:103.90px;top:379px;font-size:7px;line-height:7px;color:#8f8f8f;transform:scaleX(1.054);">Expanded...</span>
<span class="t" style="left:19.70px;top:430px;font-size:7px;line-height:7px;color:#8f8f8f;transform:scaleX(1.085);">Label</span>
<span class="t" style="left:56.65px;top:430px;font-size:7px;line-height:7px;color:#8f8f8f;transform:scaleX(1.061);">Folder m...</span>
<span class="t" style="left:110.95px;top:430px;font-size:7px;line-height:7px;color:#8f8f8f;transform:scaleX(1.101);">Folders</span>
<span class="t" style="left:8.95px;top:481px;font-size:7px;line-height:7px;color:#8f8f8f;transform:scaleX(1.109);">Communi...</span>
<span class="t" style="left:67.95px;top:481px;font-size:7px;line-height:7px;color:#8f8f8f;transform:scaleX(1.046);">Feed</span>
<span class="t" style="left:103.90px;top:481px;font-size:7px;line-height:7px;color:#8f8f8f;transform:scaleX(1.113);">Attachme...</span>
<span class="t" style="left:12.00px;top:532px;font-size:7px;line-height:7px;color:#8f8f8f;transform:scaleX(1.098);">Approvals</span>
<span class="t" style="left:56.65px;top:532px;font-size:7px;line-height:7px;color:#8f8f8f;transform:scaleX(1.025);">Progress ...</span>
<span class="t" style="left:104.00px;top:532px;font-size:7px;line-height:7px;color:#8f8f8f;transform:scaleX(1.055);">Approvals...</span>
<span class="t" style="left:66.60px;top:278px;font-size:12px;line-height:14px;color:#e8311a;font-weight:700;transform:scaleX(1.048);">100</span>
<span class="t" style="left:119.20px;top:289px;font-size:6.5px;line-height:7px;color:#7a8aa8;transform:scaleX(1.106);">88</span>
<span class="t" style="left:25.15px;top:358px;font-size:6px;line-height:6px;color:#ffffff;font-weight:700;transform:scaleX(0.944);">OK</span>
<span class="t" style="left:13.48px;top:405px;font-size:6px;line-height:6px;color:#111111;font-weight:700;transform:scaleX(0.966);">Text</span>
<span class="t" style="left:205.71px;top:58px;font-size:14.6px;line-height:16px;color:#24345a;transform:scaleX(1.084);-webkit-text-stroke:0.53px #24345a;">Page title</span>
<span class="t" style="left:195.86px;top:98px;font-size:7px;line-height:7px;color:#33415a;letter-spacing:0.033px;transform:scaleX(1.130);">Add tag</span>
<span class="t" style="left:485.55px;top:62px;font-size:7.8px;line-height:9px;color:#ffffff;transform:scaleX(1.040);-webkit-text-stroke:0.28px #ffffff;">Save</span>
<span class="t" style="left:525.84px;top:62px;font-size:7.8px;line-height:9px;color:#ffffff;letter-spacing:0.045px;transform:scaleX(1.130);-webkit-text-stroke:0.28px #ffffff;">Assign to me</span>
<span class="t" style="left:610.34px;top:62px;font-size:7.8px;line-height:9px;color:#ffffff;transform:scaleX(1.087);-webkit-text-stroke:0.28px #ffffff;">Escalate</span>
<span class="t" style="left:676.34px;top:62px;font-size:7.8px;line-height:9px;color:#33415a;transform:scaleX(1.112);">Cancel</span>
<span class="t" style="left:725.34px;top:62px;font-size:7.8px;line-height:9px;color:#33415a;transform:scaleX(1.078);">Close</span>
<span class="t" style="left:568.36px;top:96px;font-size:6.9px;line-height:7px;color:#33415a;transform:scaleX(1.105);">Timeline</span>
<span class="t" style="left:623.86px;top:96px;font-size:6.9px;line-height:7px;color:#33415a;transform:scaleX(1.075);">Next steps</span>
<span class="t" style="left:685.86px;top:96px;font-size:6.9px;line-height:7px;color:#33415a;transform:scaleX(1.050);">Feed</span>
<span class="t" style="left:728.86px;top:96px;font-size:6.9px;line-height:7px;color:#33415a;letter-spacing:0.107px;transform:scaleX(1.130);">Attachments</span>
<span class="t" style="left:204.55px;top:177px;font-size:7.6px;line-height:9px;color:#ffffff;transform:scaleX(1.063);-webkit-text-stroke:0.27px #ffffff;">SERVICE COMMITMENTS</span>
<span class="t" style="left:207.30px;top:208px;font-size:8.6px;line-height:10px;color:#ffffff;letter-spacing:0.158px;transform:scaleX(1.130);-webkit-text-stroke:0.31px #ffffff;">Remaining response:</span>
<span class="t" style="left:233.60px;top:219px;font-size:8.6px;line-height:10px;color:#ffffff;letter-spacing:0.533px;transform:scaleX(1.130);-webkit-text-stroke:0.31px #ffffff;">0hr 0min</span>
<span class="t" style="left:204.80px;top:253px;font-size:8.6px;line-height:10px;color:#ffffff;letter-spacing:0.269px;transform:scaleX(1.130);-webkit-text-stroke:0.31px #ffffff;">Remaining resolution:</span>
<span class="t" style="left:233.60px;top:264px;font-size:8.6px;line-height:10px;color:#ffffff;letter-spacing:0.533px;transform:scaleX(1.130);-webkit-text-stroke:0.31px #ffffff;">0hr 0min</span>
<span class="t" style="left:191.85px;top:315px;font-size:7.6px;line-height:9px;color:#3b4658;transform:scaleX(1.058);">SUBMITTER PROFILE</span>
<span class="t" style="left:240.02px;top:336px;font-size:8.8px;line-height:10px;color:#1f3d6e;letter-spacing:0.115px;transform:scaleX(1.130);">Alice Phillips</span>
<span class="t" style="left:240.06px;top:350px;font-size:6.9px;line-height:7px;color:#1c1c1c;transform:scaleX(0.961);">10:15 AM</span>
<span class="t" style="left:240.06px;top:360px;font-size:6.9px;line-height:7px;color:#1c1c1c;transform:scaleX(1.112);">United States</span>
<span class="t" style="left:191.86px;top:392px;font-size:6.9px;line-height:7px;color:#7a7a7a;transform:scaleX(1.110);">Preferred language</span>
<span class="t" style="left:191.85px;top:402px;font-size:7.3px;line-height:9px;color:#1c1c1c;transform:scaleX(1.119);">English (United States)</span>
<span class="t" style="left:191.86px;top:421px;font-size:6.9px;line-height:7px;color:#7a7a7a;transform:scaleX(1.123);">Primary email - primary</span>
<span class="t" style="left:206.35px;top:430px;font-size:7.3px;line-height:9px;color:#1f55d0;transform:scaleX(1.102);">a.phillips123@gmail.com</span>
<span class="t" style="left:191.86px;top:450px;font-size:6.9px;line-height:7px;color:#7a7a7a;transform:scaleX(1.123);">Primary phone - primary</span>
<span class="t" style="left:205.35px;top:459px;font-size:7.3px;line-height:9px;color:#1f55d0;">+1 857 372 3345</span>
<span class="t" style="left:191.86px;top:478px;font-size:6.9px;line-height:7px;color:#7a7a7a;transform:scaleX(1.103);">Facebook - primary</span>
<span class="t" style="left:206.35px;top:488px;font-size:7.3px;line-height:9px;color:#1f55d0;letter-spacing:0.046px;transform:scaleX(1.130);">https://www.facebook.com/?id...</span>
<span class="t" style="left:196.10px;top:543px;font-size:4.6px;line-height:5px;color:#1a7fc4;font-weight:700;transform:scaleX(1.015);">Alpha Business</span>
<span class="t" style="left:241.32px;top:510px;font-size:8.8px;line-height:10px;color:#33415a;transform:scaleX(1.130);">Alpha Business</span>
<span class="t" style="left:241.06px;top:523px;font-size:6.9px;line-height:7px;color:#1c1c1c;transform:scaleX(1.087);">A&amp;B</span>
<span class="t" style="left:241.06px;top:534px;font-size:6.9px;line-height:7px;color:#1c1c1c;transform:scaleX(1.028);">7:20 AM</span>
<span class="t" style="left:241.06px;top:544px;font-size:6.9px;line-height:7px;color:#1c1c1c;transform:scaleX(1.088);">United States</span>
<span class="t" style="left:191.86px;top:563px;font-size:6.9px;line-height:7px;color:#7a7a7a;transform:scaleX(1.106);">Phone number</span>
<span class="t" style="left:390.15px;top:179px;font-size:7.6px;line-height:9px;color:#1f9a78;transform:scaleX(1.046);">PROFILE</span>
<span class="t" style="left:475.35px;top:178px;font-size:7.6px;line-height:9px;color:#ffffff;transform:scaleX(1.071);-webkit-text-stroke:0.27px #ffffff;">LOCATION</span>
<span class="t" style="left:547.35px;top:178px;font-size:7.6px;line-height:9px;color:#ffffff;transform:scaleX(1.082);-webkit-text-stroke:0.27px #ffffff;">SUBMISSION INFO</span>
<span class="t" style="left:652.35px;top:178px;font-size:7.6px;line-height:9px;color:#ffffff;transform:scaleX(1.028);-webkit-text-stroke:0.27px #ffffff;">CHECKLISTS</span>
<span class="t" style="left:730.85px;top:178px;font-size:7.6px;line-height:9px;color:#ffffff;transform:scaleX(0.880);-webkit-text-stroke:0.27px #ffffff;">PERFORMANCE</span>
<span class="t" style="left:373.84px;top:205px;font-size:7.8px;line-height:9px;color:#ffffff;letter-spacing:0.052px;transform:scaleX(1.130);-webkit-text-stroke:0.28px #ffffff;">Suggested articles</span>
<span class="t" style="left:374.69px;top:220px;font-size:15.5px;line-height:17px;color:#ffffff;transform:scaleX(0.928);-webkit-text-stroke:0.56px #ffffff;">31</span>
<span class="t" style="left:516.34px;top:205px;font-size:7.8px;line-height:9px;color:#ffffff;letter-spacing:0.106px;transform:scaleX(1.130);-webkit-text-stroke:0.28px #ffffff;">Similar requests identified</span>
<span class="t" style="left:516.89px;top:220px;font-size:15.5px;line-height:17px;color:#ffffff;transform:scaleX(1.100);-webkit-text-stroke:0.56px #ffffff;">8</span>
<span class="t" style="left:659.34px;top:205px;font-size:7.8px;line-height:9px;color:#ffffff;letter-spacing:0.130px;transform:scaleX(1.130);-webkit-text-stroke:0.28px #ffffff;">Incomplete checklist items</span>
<span class="t" style="left:659.89px;top:220px;font-size:15.5px;line-height:17px;color:#ffffff;transform:scaleX(1.100);-webkit-text-stroke:0.56px #ffffff;">7</span>
<span class="t" style="left:373.82px;top:254px;font-size:9px;line-height:10px;color:#25b456;transform:scaleX(1.098);">Expenses by type</span>
<span class="t" style="left:587.82px;top:254px;font-size:9px;line-height:10px;color:#25b456;transform:scaleX(1.118);">Satisfaction level</span>
<span class="t" style="left:457.66px;top:273px;font-size:7.2px;line-height:9px;color:#8e8e8e;transform:scaleX(1.060);">Behavioral</span>
<span class="t" style="left:457.66px;top:282px;font-size:7.2px;line-height:9px;color:#8e8e8e;transform:scaleX(1.028);">health serv... - 7%</span>
<span class="t" style="left:369.86px;top:334px;font-size:7.2px;line-height:9px;color:#8e8e8e;transform:scaleX(0.984);">IT services - 52%</span>
<span class="t" style="left:508.16px;top:357px;font-size:7.2px;line-height:9px;color:#8e8e8e;transform:scaleX(1.057);">Human</span>
<span class="t" style="left:508.16px;top:366px;font-size:7.2px;line-height:9px;color:#8e8e8e;transform:scaleX(0.991);">services - 27%</span>
<span class="t" style="left:633.57px;top:366px;font-size:8.6px;line-height:10px;color:#8e8e8e;transform:scaleX(1.100);">0</span>
<span class="t" style="left:703.87px;top:293px;font-size:8.6px;line-height:10px;color:#8e8e8e;transform:scaleX(1.100);">3</span>
<span class="t" style="left:733.87px;top:324px;font-size:8.6px;line-height:10px;color:#8e8e8e;transform:scaleX(1.100);">4</span>
<span class="t" style="left:728.37px;top:366px;font-size:8.6px;line-height:10px;color:#8e8e8e;transform:scaleX(1.100);">5</span>
<span class="t" style="left:677.63px;top:335px;font-size:19.5px;line-height:22px;color:#12b852;transform:scaleX(1.100);-webkit-text-stroke:0.70px #12b852;">4</span>
<span class="t" style="left:387.34px;top:421px;font-size:7.8px;line-height:9px;color:#24385c;transform:scaleX(1.118);">Key info</span>
<span class="t" style="left:378.86px;top:453px;font-size:6.9px;line-height:7px;color:#7a7a7a;transform:scaleX(1.088);">Subject</span>
<span class="t" style="left:378.85px;top:462px;font-size:7.3px;line-height:9px;color:#1c1c1c;letter-spacing:0.012px;transform:scaleX(1.130);">Report on fallen tree</span>
<span class="t" style="left:378.86px;top:482px;font-size:6.9px;line-height:7px;color:#7a7a7a;letter-spacing:0.027px;transform:scaleX(1.130);">Submitted description</span>
<span class="t" style="left:378.85px;top:491px;font-size:7.3px;line-height:9px;color:#1c1c1c;transform:scaleX(1.118);">Fallen tree in the Public Garden.</span>
<span class="t" style="left:378.86px;top:510px;font-size:6.9px;line-height:7px;color:#7a7a7a;transform:scaleX(1.117);">Office updates</span>
<span class="t" style="left:378.85px;top:520px;font-size:7.3px;line-height:9px;color:#1c1c1c;transform:scaleX(1.119);">The request needs to be addressed to the Residential service for further...</span>
<span class="t" style="left:378.86px;top:539px;font-size:6.9px;line-height:7px;color:#7a7a7a;transform:scaleX(1.053);">Source</span>
<span class="t" style="left:378.85px;top:549px;font-size:7.3px;line-height:9px;color:#1c1c1c;transform:scaleX(1.102);">Chat</span>
<span class="t" style="left:667.86px;top:453px;font-size:6.9px;line-height:7px;color:#7a7a7a;letter-spacing:0.033px;transform:scaleX(1.130);">Priority</span>
<span class="t" style="left:672.45px;top:463px;font-size:7.3px;line-height:9px;color:#7a1fa0;letter-spacing:0.208px;transform:scaleX(1.130);">Medium</span>
<span class="t" style="left:667.86px;top:482px;font-size:6.9px;line-height:7px;color:#7a7a7a;transform:scaleX(1.108);">Category</span>
<span class="t" style="left:672.45px;top:492px;font-size:7.3px;line-height:9px;color:#45279a;transform:scaleX(1.104);">Service request</span>
<span class="t" style="left:667.86px;top:511px;font-size:6.9px;line-height:7px;color:#7a7a7a;transform:scaleX(1.111);">Subcategory</span>
<span class="t" style="left:667.85px;top:521px;font-size:7.3px;line-height:9px;color:#1c1c1c;transform:scaleX(1.105);">Parks and trees</span>
<span class="t" style="left:667.86px;top:539px;font-size:6.9px;line-height:7px;color:#7a7a7a;transform:scaleX(1.120);">Neighborhood</span>
<span class="t" style="left:667.85px;top:549px;font-size:7.3px;line-height:9px;color:#1f55d0;letter-spacing:0.189px;transform:scaleX(1.130);">Downtown</span>
<span class="t" style="left:838.81px;top:36px;font-size:9.4px;line-height:11px;color:#ffffff;transform:scaleX(1.106);">Chart settings</span>
<span class="t" style="left:838.85px;top:62px;font-size:7.5px;line-height:9px;color:#3b4658;transform:scaleX(1.074);">GENERAL</span>
<span class="t" style="left:838.86px;top:90px;font-size:6.9px;line-height:7px;color:#7a7a7a;transform:scaleX(1.109);">Style</span>
<span class="t" style="left:838.85px;top:99px;font-size:7.3px;line-height:9px;color:#1c1c1c;transform:scaleX(1.124);">Fully colored</span>
<span class="t" style="left:838.86px;top:126px;font-size:6.9px;line-height:7px;color:#7a7a7a;transform:scaleX(1.093);">Color</span>
<span class="t" style="left:838.86px;top:166px;font-size:6.9px;line-height:7px;color:#7a7a7a;transform:scaleX(1.044);">Size</span>
<span class="t" style="left:843.55px;top:183px;font-size:7.6px;line-height:9px;color:#1b2a4a;transform:scaleX(1.035);-webkit-text-stroke:0.27px #1b2a4a;">XS</span>
<span class="t" style="left:863.21px;top:183px;font-size:7.6px;line-height:9px;color:#1b2a4a;transform:scaleX(1.100);-webkit-text-stroke:0.27px #1b2a4a;">S</span>
<span class="t" style="left:880.22px;top:183px;font-size:7.6px;line-height:9px;color:#1b2a4a;transform:scaleX(1.100);-webkit-text-stroke:0.27px #1b2a4a;">M</span>
<span class="t" style="left:898.87px;top:183px;font-size:7.6px;line-height:9px;color:#1b2a4a;transform:scaleX(1.100);-webkit-text-stroke:0.27px #1b2a4a;">L</span>
<span class="t" style="left:914.50px;top:183px;font-size:7.6px;line-height:9px;color:#1b2a4a;transform:scaleX(1.076);-webkit-text-stroke:0.27px #1b2a4a;">XL</span>
<span class="t" style="left:838.85px;top:206px;font-size:7.3px;line-height:9px;color:#24344e;letter-spacing:0.042px;transform:scaleX(1.130);">Set up chart</span>
<span class="t" style="left:848.00px;top:225px;font-size:8.3px;line-height:10px;color:#ffffff;letter-spacing:0.147px;transform:scaleX(1.130);-webkit-text-stroke:0.30px #ffffff;">Chart settings</span>
<span class="t" style="left:838.85px;top:252px;font-size:7.5px;line-height:9px;color:#24344e;transform:scaleX(1.125);">Apply filter by page data</span>
<span class="t" style="left:858.86px;top:282px;font-size:6.9px;line-height:7px;color:#33415a;transform:scaleX(1.090);">Data source</span>
<span class="t" style="left:858.85px;top:292px;font-size:7.3px;line-height:9px;color:#33415a;transform:scaleX(1.027);">Case</span>
<span class="t" style="left:858.86px;top:310px;font-size:6.9px;line-height:7px;color:#33415a;transform:scaleX(0.994);">Case</span>
<span class="t" style="left:858.85px;top:321px;font-size:7.3px;line-height:9px;color:#33415a;letter-spacing:0.101px;transform:scaleX(1.130);">Id</span>
<span class="t" style="left:932.86px;top:310px;font-size:6.9px;line-height:7px;color:#33415a;transform:scaleX(1.028);">Citizen ca...</span>
<span class="t" style="left:932.85px;top:321px;font-size:7.3px;line-height:9px;color:#33415a;transform:scaleX(0.973);">Ch...</span>
<span class="t" style="left:838.85px;top:358px;font-size:7.5px;line-height:9px;color:#3b4658;transform:scaleX(1.092);">APPEARANCE</span>
<span class="t" style="left:838.86px;top:384px;font-size:6.9px;line-height:7px;color:#7a7a7a;transform:scaleX(1.119);">Use icon</span>
<span class="t" style="left:838.86px;top:413px;font-size:6.9px;line-height:7px;color:#7a7a7a;letter-spacing:0.081px;transform:scaleX(1.130);">Icon</span>
<span class="t" style="left:969.86px;top:413px;font-size:6.9px;line-height:7px;color:#7a7a7a;transform:scaleX(1.063);">Color</span>
<span class="t" style="left:838.85px;top:445px;font-size:7.5px;line-height:9px;color:#3b4658;transform:scaleX(1.078);">VISIBILITY</span>
<span class="t" style="left:934.32px;top:471px;font-size:9.2px;line-height:10px;color:#24385c;transform:scaleX(1.060);">Setup conditions</span>
<span class="t" style="left:838.85px;top:505px;font-size:7.5px;line-height:9px;color:#3b4658;transform:scaleX(1.130);">ADVANCED</span>
<span class="t" style="left:838.86px;top:533px;font-size:6.9px;line-height:7px;color:#7a7a7a;letter-spacing:0.111px;transform:scaleX(1.130);">Element code</span>
<span class="t" style="left:838.85px;top:543px;font-size:7.3px;line-height:9px;color:#1c1c1c;letter-spacing:0.106px;transform:scaleX(1.130);">IndicatorWidget_srvcgiw</span>
</div>
<div style="left:726px;top:172.500px;width:62px;height:20.300px;background:rgba(238,243,252,0.975);border-radius:2px;z-index:5;box-shadow:0 0.5px 1.5px rgba(0,0,0,0.12);"></div>
<svg style="position:absolute;left:0;top:0;z-index:6" width="1024" height="565" viewBox="0 0 1024 565">
<g fill="#13294f" transform="translate(737.4 183.7) scale(0.82) translate(-737 -183.8)"><path d="M736.500 179.600l1.100 0 .3 1.100 .8 .3 1-.6 .8 .8-.6 1 .3 .8 1.100 .3 0 1.100-1.100 .3-.3 .8 .6 1-.8 .8-1-.6-.8 .3-.3 1.100-1.100 0-.3-1.100-.8-.3-1 .6-.8-.8 .6-1-.3-.8-1.100-.3 0-1.100 1.100-.3 .3-.8-.6-1 .8-.8 1 .6 .8-.3z"/></g>
<circle cx="737.4" cy="183.700" r="1.050" fill="#f0f4fc"/>
<rect x="753.400" y="179.800" width="5.600" height="5.600" rx="1" fill="none" stroke="#13294f" stroke-width="1"/>
<rect x="756" y="182.400" width="5.800" height="5.800" rx="1" fill="#13294f" stroke="#f0f4fc" stroke-width="0.6"/>
<g transform="translate(777.200 183.800)"><rect x="-3.400" y="-3.200" width="6.800" height="1.200" rx="0.4" fill="#13294f"/><rect x="-1.300" y="-4.100" width="2.600" height="1.200" rx="0.4" fill="#13294f"/><path d="M-2.800 -1.500h5.600l-.5 5.200a.8.8 0 0 1-.8.700h-3a.8.8 0 0 1-.8-.7z" fill="#13294f"/></g>
</svg>
<div style="left:1023px;top:0;width:1px;height:565px;background:rgba(0,0,0,0.2);z-index:7;"></div>
</div>
</body>
</html>
